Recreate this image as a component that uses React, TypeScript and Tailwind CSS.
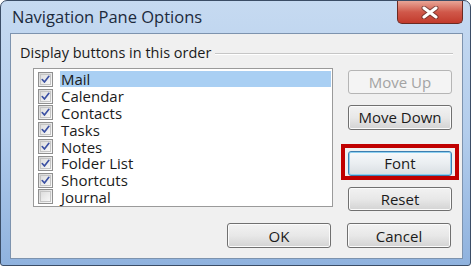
import React from "react";

const items = [
  { label: "Mail", checked: true, selected: true },
  { label: "Calendar", checked: true },
  { label: "Contacts", checked: true },
  { label: "Tasks", checked: true },
  { label: "Notes", checked: true },
  { label: "Folder List", checked: true },
  { label: "Shortcuts", checked: true },
  { label: "Journal", checked: false },
];

function CheckBox({ checked }: { checked: boolean }) {
  return (
    <div className="w-[15px] h-[15px] border border-[#8f8f8f] bg-gradient-to-br from-[#d6d6d6] to-[#fbfbfb] p-[1px] flex items-center justify-center shrink-0">
      <div className="w-full h-full border border-[#c4c4c4] bg-gradient-to-br from-[#dedede] to-[#f7f7f7] flex items-center justify-center">
        {checked && (
          <svg width="11" height="11" viewBox="0 0 11 11">
            <path d="M1.5 5.5 L4.2 8.6 L9.6 1.6" fill="none" stroke="#3b50a3" strokeWidth="2" strokeLinecap="round" strokeLinejoin="round" />
          </svg>
        )}
      </div>
    </div>
  );
}

function Btn({ children, disabled, focused, className = "" }: { children: React.ReactNode; disabled?: boolean; focused?: boolean; className?: string }) {
  const base = "w-[104px] h-[25px] rounded-[3px] border flex items-center justify-center text-[15px] leading-[18px]";
  const look = disabled
    ? "border-[#b5b5b5] bg-[#f4f4f4] text-[#a3a3a3]"
    : focused
    ? "border-[#3c7fb1] bg-gradient-to-b from-[#f6f9fb] via-[#eaeef1] to-[#d9dee2] text-[#1b1b1b] shadow-[inset_0_0_0_1px_#8ed0f0]"
    : "border-[#707070] bg-gradient-to-b from-[#f2f2f2] via-[#e8e8e8] to-[#d3d3d3] text-[#1b1b1b] shadow-[inset_0_0_0_1px_#fbfbfb]";
  return <div className={`${base} ${look} ${className}`}>{children}</div>;
}

export default function App() {
  return (
    <div className="w-[474px] h-[268px] bg-white overflow-hidden" style={{ fontFamily: '"Open Sans", "Noto Sans", sans-serif' }}>
      <div className="w-[471px] h-[266px] rounded-t-[7px] rounded-b-[3px] border border-[#3b4d66] bg-gradient-to-b from-[#c6daf1] via-[#b3cdec] to-[#8fb2de] flex flex-col pl-[9px] pr-[7px]">
        {/* title bar */}
        <div className="h-[32px] flex items-start justify-between shrink-0">
          <div className="pl-[2px] pt-[6px] text-[16.5px] leading-[20px] text-[#1c2a3c]">Navigation Pane Options</div>
          <div className="w-[66px] h-[23px] rounded-b-[5px] border border-t-0 border-[#6b2a22] bg-gradient-to-b from-[#e8a597] via-[#d0584a] to-[#c23a2c] flex items-center justify-center">
            <svg width="18" height="13" viewBox="0 0 18 13">
              <path d="M3 2 L15 11 M15 2 L3 11" stroke="#3a2020" strokeWidth="5" strokeLinecap="round" opacity="0.55" />
              <path d="M3 2 L15 11 M15 2 L3 11" stroke="#ffffff" strokeWidth="3" strokeLinecap="round" />
            </svg>
          </div>
        </div>
        {/* client */}
        <div className="w-[453px] h-[226px] border border-[#7d93ae] bg-[#f0f0f0] flex flex-col text-[#1b1b1b]">
          <div className="h-[18px] mt-[10px] pl-[9px] pr-[9px] flex items-center">
            <span className="text-[14.5px] leading-[18px]">Display buttons in this order</span>
            <div className="flex-1 ml-[4px] mt-[1px] h-[2px] border-t border-[#c6c6c6] border-b border-b-white" />
          </div>
          <div className="flex pl-[22px] mt-[6px] h-[143px]">
            <div className="w-[300px] h-[139px] border border-[#9a9a9a] bg-white pt-[2px] pl-[4px] pr-[1px]">
              {items.map((it) => (
                <div key={it.label} className="h-[16.8px] flex items-center">
                  <CheckBox checked={it.checked} />
                  <div className={`ml-[7px] flex-1 h-[16px] flex items-center pl-[1px] text-[15px] leading-[16px] ${it.selected ? "bg-[#a9cff3]" : ""}`}>
                    {it.label}
                  </div>
                </div>
              ))}
            </div>
            <div className="ml-[15px] pt-[2px] flex flex-col">
              <Btn disabled>Move Up</Btn>
              <Btn className="mt-[11px]">Move Down</Btn>
              <div className="relative mt-[21px]">
                <div className="absolute -left-[7px] -top-[7px] w-[118px] h-[36px] border-[4px] border-[#c00000]" />
                <Btn focused>Font</Btn>
              </div>
              <Btn className="mt-[11px]">Reset</Btn>
            </div>
          </div>
          <div className="flex pl-[216px] mt-[12px] gap-[16px]">
            <Btn>OK</Btn>
            <Btn>Cancel</Btn>
          </div>
        </div>
      </div>
    </div>
  );
}
